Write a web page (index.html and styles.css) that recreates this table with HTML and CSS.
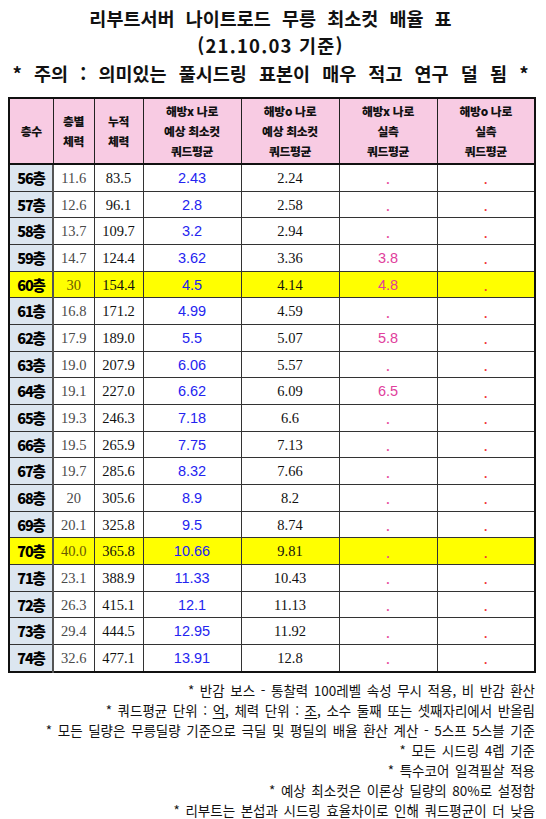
FILE: index.html
```html
<!DOCTYPE html>
<html lang="ko">
<head>
<meta charset="utf-8">
<title>리부트서버 나이트로드 무릉 최소컷 배율 표</title>
<link rel="stylesheet" href="styles.css">
</head>
<body>
<div class="page">
  <div class="titles">
    <div class="t1">리부트서버 나이트로드 무릉 최소컷 배율 표</div>
    <div class="t2">(21.10.03 기준)</div>
    <div class="t3">* 주의 : 의미있는 풀시드링 표본이 매우 적고 연구 덜 됨 *</div>
  </div>
  <table class="grid">
    <colgroup>
      <col class="c-floor"><col class="c-hp"><col class="c-acc"><col class="c-wide"><col class="c-wide"><col class="c-wide"><col class="c-wide">
    </colgroup>
    <thead>
      <tr>
        <th>층수</th>
        <th>층별<br>체력</th>
        <th>누적<br>체력</th>
        <th>해방x 나로<br>예상 최소컷<br>쿼드평균</th>
        <th>해방o 나로<br>예상 최소컷<br>쿼드평균</th>
        <th>해방x 나로<br>실측<br>쿼드평균</th>
        <th>해방o 나로<br>실측<br>쿼드평균</th>
      </tr>
    </thead>
    <tbody>
      <tr><td class="fl">56층</td><td class="hp">11.6</td><td class="acc">83.5</td><td class="ex">2.43</td><td class="eo">2.24</td><td class="mx"><span class="dot">.</span></td><td class="mo"><span class="dot">.</span></td></tr>
      <tr><td class="fl">57층</td><td class="hp">12.6</td><td class="acc">96.1</td><td class="ex">2.8</td><td class="eo">2.58</td><td class="mx"><span class="dot">.</span></td><td class="mo"><span class="dot">.</span></td></tr>
      <tr><td class="fl">58층</td><td class="hp">13.7</td><td class="acc">109.7</td><td class="ex">3.2</td><td class="eo">2.94</td><td class="mx"><span class="dot">.</span></td><td class="mo"><span class="dot">.</span></td></tr>
      <tr><td class="fl">59층</td><td class="hp">14.7</td><td class="acc">124.4</td><td class="ex">3.62</td><td class="eo">3.36</td><td class="mx">3.8</td><td class="mo"><span class="dot">.</span></td></tr>
      <tr class="hl"><td class="fl">60층</td><td class="hp">30</td><td class="acc">154.4</td><td class="ex">4.5</td><td class="eo">4.14</td><td class="mx">4.8</td><td class="mo"><span class="dot">.</span></td></tr>
      <tr><td class="fl">61층</td><td class="hp">16.8</td><td class="acc">171.2</td><td class="ex">4.99</td><td class="eo">4.59</td><td class="mx"><span class="dot">.</span></td><td class="mo"><span class="dot">.</span></td></tr>
      <tr><td class="fl">62층</td><td class="hp">17.9</td><td class="acc">189.0</td><td class="ex">5.5</td><td class="eo">5.07</td><td class="mx">5.8</td><td class="mo"><span class="dot">.</span></td></tr>
      <tr><td class="fl">63층</td><td class="hp">19.0</td><td class="acc">207.9</td><td class="ex">6.06</td><td class="eo">5.57</td><td class="mx"><span class="dot">.</span></td><td class="mo"><span class="dot">.</span></td></tr>
      <tr><td class="fl">64층</td><td class="hp">19.1</td><td class="acc">227.0</td><td class="ex">6.62</td><td class="eo">6.09</td><td class="mx">6.5</td><td class="mo"><span class="dot">.</span></td></tr>
      <tr><td class="fl">65층</td><td class="hp">19.3</td><td class="acc">246.3</td><td class="ex">7.18</td><td class="eo">6.6</td><td class="mx"><span class="dot">.</span></td><td class="mo"><span class="dot">.</span></td></tr>
      <tr><td class="fl">66층</td><td class="hp">19.5</td><td class="acc">265.9</td><td class="ex">7.75</td><td class="eo">7.13</td><td class="mx"><span class="dot">.</span></td><td class="mo"><span class="dot">.</span></td></tr>
      <tr><td class="fl">67층</td><td class="hp">19.7</td><td class="acc">285.6</td><td class="ex">8.32</td><td class="eo">7.66</td><td class="mx"><span class="dot">.</span></td><td class="mo"><span class="dot">.</span></td></tr>
      <tr><td class="fl">68층</td><td class="hp">20</td><td class="acc">305.6</td><td class="ex">8.9</td><td class="eo">8.2</td><td class="mx"><span class="dot">.</span></td><td class="mo"><span class="dot">.</span></td></tr>
      <tr><td class="fl">69층</td><td class="hp">20.1</td><td class="acc">325.8</td><td class="ex">9.5</td><td class="eo">8.74</td><td class="mx"><span class="dot">.</span></td><td class="mo"><span class="dot">.</span></td></tr>
      <tr class="hl"><td class="fl">70층</td><td class="hp">40.0</td><td class="acc">365.8</td><td class="ex">10.66</td><td class="eo">9.81</td><td class="mx"><span class="dot">.</span></td><td class="mo"><span class="dot">.</span></td></tr>
      <tr><td class="fl">71층</td><td class="hp">23.1</td><td class="acc">388.9</td><td class="ex">11.33</td><td class="eo">10.43</td><td class="mx"><span class="dot">.</span></td><td class="mo"><span class="dot">.</span></td></tr>
      <tr><td class="fl">72층</td><td class="hp">26.3</td><td class="acc">415.1</td><td class="ex">12.1</td><td class="eo">11.13</td><td class="mx"><span class="dot">.</span></td><td class="mo"><span class="dot">.</span></td></tr>
      <tr><td class="fl">73층</td><td class="hp">29.4</td><td class="acc">444.5</td><td class="ex">12.95</td><td class="eo">11.92</td><td class="mx"><span class="dot">.</span></td><td class="mo"><span class="dot">.</span></td></tr>
      <tr><td class="fl">74층</td><td class="hp">32.6</td><td class="acc">477.1</td><td class="ex">13.91</td><td class="eo">12.8</td><td class="mx"><span class="dot">.</span></td><td class="mo"><span class="dot">.</span></td></tr>
    </tbody>
  </table>
  <div class="notes">
    <p>* 반감 보스 - 통찰력 100레벨 속성 무시 적용, 비 반감 환산</p>
    <p>* 쿼드평균 단위 : <u>억</u>, 체력 단위 : <u>조</u>, 소수 둘째 또는 셋째자리에서 반올림</p>
    <p>* 모든 딜량은 무릉딜량 기준으로 극딜 및 평딜의 배율 환산 계산 - 5스프 5스블 기준</p>
    <p>* 모든 시드링 4렙 기준</p>
    <p>* 특수코어 일격필살 적용</p>
    <p>* 예상 최소컷은 이론상 딜량의 80%로 설정함</p>
    <p>* 리부트는 본섭과 시드링 효율차이로 인해 쿼드평균이 더 낮음</p>
  </div>
</div>
</body>
</html>
```

FILE: styles.css
```css
html, body {
  margin: 0;
  padding: 0;
  background: #ffffff;
}

body {
  font-family: "Noto Sans CJK KR", "Noto Sans", sans-serif;
  color: #111111;
}

.page {
  width: 525px;
  padding: 0 13px 0 8px;
}

.titles {
  text-align: center;
  color: #111111;
  padding-top: 5px;
  padding-bottom: 9px;
}

.t1 {
  font-size: 18.5px;
  font-weight: 700;
  line-height: 27px;
  word-spacing: 6px;
}

.t2 {
  font-size: 18.5px;
  font-weight: 700;
  line-height: 26px;
  letter-spacing: 1.2px;
}

.t3 {
  font-size: 18.5px;
  font-weight: 700;
  line-height: 30px;
  word-spacing: 7px;
}

.grid {
  width: 525px;
  border-collapse: collapse;
  table-layout: fixed;
  border: 2px solid #111111;
}

.c-floor { width: 44px; }
.c-hp { width: 41px; }
.c-acc { width: 49px; }
.c-wide { width: 98px; }

.grid th {
  background: #f8cbe3;
  border: 1px solid #222222;
  border-bottom: 2px solid #111111;
  height: 64px;
  padding: 0;
  font-size: 11.8px;
  font-weight: 900;
  line-height: 20px;
  letter-spacing: -0.3px;
  color: #111111;
  vertical-align: middle;
}

.grid td {
  border: 1px solid #333333;
  height: 25.68px;
  padding: 0;
  text-align: center;
  vertical-align: middle;
  font-size: 14.5px;
  line-height: 16px;
}

.grid td.fl {
  background: #dce6f0;
  font-family: "Noto Sans CJK KR", sans-serif;
  font-weight: 900;
  font-size: 14.5px;
  letter-spacing: -1.2px;
  color: #000000;
  border-right: 2px solid #555555;
}

.grid td.hp {
  font-family: "Liberation Serif", serif;
  color: #4a4a4a;
}

.grid td.acc {
  font-family: "Liberation Serif", serif;
  color: #111111;
}

.grid td.ex {
  font-family: "Liberation Sans", sans-serif;
  color: #2424f0;
}

.grid td.eo {
  font-family: "Liberation Serif", serif;
  color: #111111;
}

.grid td.mx {
  font-family: "Liberation Sans", sans-serif;
  color: #e0409c;
}

.grid td.mo {
  font-family: "Liberation Sans", sans-serif;
  color: #f04040;
}

.grid td .dot {
  font-size: 12px;
  font-weight: 700;
  position: relative;
  top: 2px;
}

.grid td.mx .dot { color: #e8509c; }
.grid td.mo .dot { color: #f03838; }

.grid tr.hl td {
  background: #ffff00;
}

.grid tr.hl td.fl {
  background: #ffff00;
}

.grid tr.hl td.hp {
  color: #6a5a00;
}

.notes {
  text-align: right;
  padding-top: 7px;
  margin-right: -2px;
}

.notes p {
  margin: 0;
  font-size: 13.5px;
  line-height: 20px;
  color: #111111;
  word-spacing: 1.8px;
}

.notes u {
  text-decoration: underline;
  text-underline-offset: 2px;
}
```
